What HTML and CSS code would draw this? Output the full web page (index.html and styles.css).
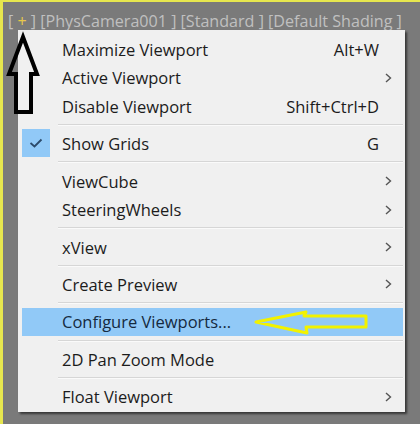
FILE: index.html
```html
<!DOCTYPE html>
<html>
<head>
<meta charset="utf-8">
<link rel="stylesheet" href="styles.css">
</head>
<body>
<div class="viewport">
  <div class="label">[ <span class="plus">+</span> ] [PhysCamera001 ] [Standard ] [Default Shading ]</div>
  <div class="menu">
    <div class="item"><span class="text">Maximize Viewport</span><span class="key">Alt+W</span><span class="sub"></span></div>
    <div class="item"><span class="text">Active Viewport</span><span class="key"></span><span class="sub"><svg width="7" height="10" viewBox="0 0 7 10"><polyline points="1,1 5.5,5 1,9" /></svg></span></div>
    <div class="item"><span class="text">Disable Viewport</span><span class="key">Shift+Ctrl+D</span><span class="sub"></span></div>
    <div class="sep"></div>
    <div class="item"><span class="check"><svg width="14" height="10" viewBox="0 0 14 10"><polyline points="1.5,5 5.5,8.5 12.5,1.5" /></svg></span><span class="text">Show Grids</span><span class="key">G</span><span class="sub"></span></div>
    <div class="sep"></div>
    <div class="item"><span class="text">ViewCube</span><span class="key"></span><span class="sub"><svg width="7" height="10" viewBox="0 0 7 10"><polyline points="1,1 5.5,5 1,9" /></svg></span></div>
    <div class="item"><span class="text">SteeringWheels</span><span class="key"></span><span class="sub"><svg width="7" height="10" viewBox="0 0 7 10"><polyline points="1,1 5.5,5 1,9" /></svg></span></div>
    <div class="sep"></div>
    <div class="item"><span class="text">xView</span><span class="key"></span><span class="sub"><svg width="7" height="10" viewBox="0 0 7 10"><polyline points="1,1 5.5,5 1,9" /></svg></span></div>
    <div class="sep"></div>
    <div class="item"><span class="text">Create Preview</span><span class="key"></span><span class="sub"><svg width="7" height="10" viewBox="0 0 7 10"><polyline points="1,1 5.5,5 1,9" /></svg></span></div>
    <div class="sep"></div>
    <div class="item active"><span class="text">Configure Viewports...</span><span class="key"></span><span class="sub"></span></div>
    <div class="sep"></div>
    <div class="item"><span class="text">2D Pan Zoom Mode</span><span class="key"></span><span class="sub"></span></div>
    <div class="sep"></div>
    <div class="item"><span class="text">Float Viewport</span><span class="key"></span><span class="sub"><svg width="7" height="10" viewBox="0 0 7 10"><polyline points="1,1 5.5,5 1,9" /></svg></span></div>
  </div>
  <svg class="annotations" width="420" height="424" viewBox="0 0 420 424">
    <polygon class="black-arrow" points="23,37 9,74 16,74 16,112 31,112 31,74 37,74" />
    <polygon class="yellow-arrow" points="256,322 306,312 304,316 366,316 366,327 306,327 307,333" />
  </svg>
</div>
</body>
</html>
```

FILE: styles.css
```css
html, body {
  margin: 0;
  padding: 0;
}

body {
  width: 420px;
  height: 424px;
  overflow: hidden;
  font-family: "Open Sans", "Noto Sans", sans-serif;
}

.viewport {
  position: relative;
  width: 420px;
  height: 424px;
  background: #7a7a7a;
  box-shadow: inset 3px 2px 0 #e6e64e;
  overflow: hidden;
}

.label {
  padding: 10px 0 0 8px;
  font-size: 16.1px;
  line-height: 22px;
  color: #c0c0c0;
  white-space: nowrap;
}

.plus {
  color: #e8c84a;
}

.menu {
  position: absolute;
  left: 18px;
  top: 30px;
  width: 381px;
  height: 376px;
  padding: 5px 2px 1px 4px;
  background: #f0f0f0;
  box-shadow: 2px 2px 2px rgba(0, 0, 0, 0.55);
  display: flex;
  flex-direction: column;
}

.item {
  position: relative;
  display: flex;
  align-items: center;
  height: 28.5px;
  padding-left: 40px;
  font-size: 16.5px;
  color: #1c1c1c;
  white-space: nowrap;
}

.item.active {
  background: #91c9f7;
  color: #152a40;
}

.text {
  flex: 1;
}

.key {
  text-align: right;
}

.sub {
  width: 24px;
  height: 10px;
  display: flex;
  align-items: center;
  padding-left: 6px;
  box-sizing: border-box;
}

.sub polyline {
  fill: none;
  stroke: #555555;
  stroke-width: 1.4;
}

.check {
  position: absolute;
  left: 0;
  top: 0;
  width: 28px;
  height: 27.5px;
  background: #91c9f7;
  display: flex;
  align-items: center;
  justify-content: center;
}

.check polyline {
  fill: none;
  stroke: #2c4a6a;
  stroke-width: 1.8;
}

.sep {
  height: 9px;
  margin-left: 36px;
  display: flex;
  align-items: center;
}

.sep::before {
  content: "";
  flex: 1;
  height: 1px;
  background: #d6d6d6;
  border-bottom: 1px solid #fafafa;
}

.annotations {
  position: absolute;
  left: 0;
  top: 0;
  pointer-events: none;
}

.black-arrow {
  fill: none;
  stroke: #000000;
  stroke-width: 4;
  stroke-linejoin: miter;
}

.yellow-arrow {
  fill: none;
  stroke: #f2f200;
  stroke-width: 3;
  stroke-linejoin: round;
}
```
